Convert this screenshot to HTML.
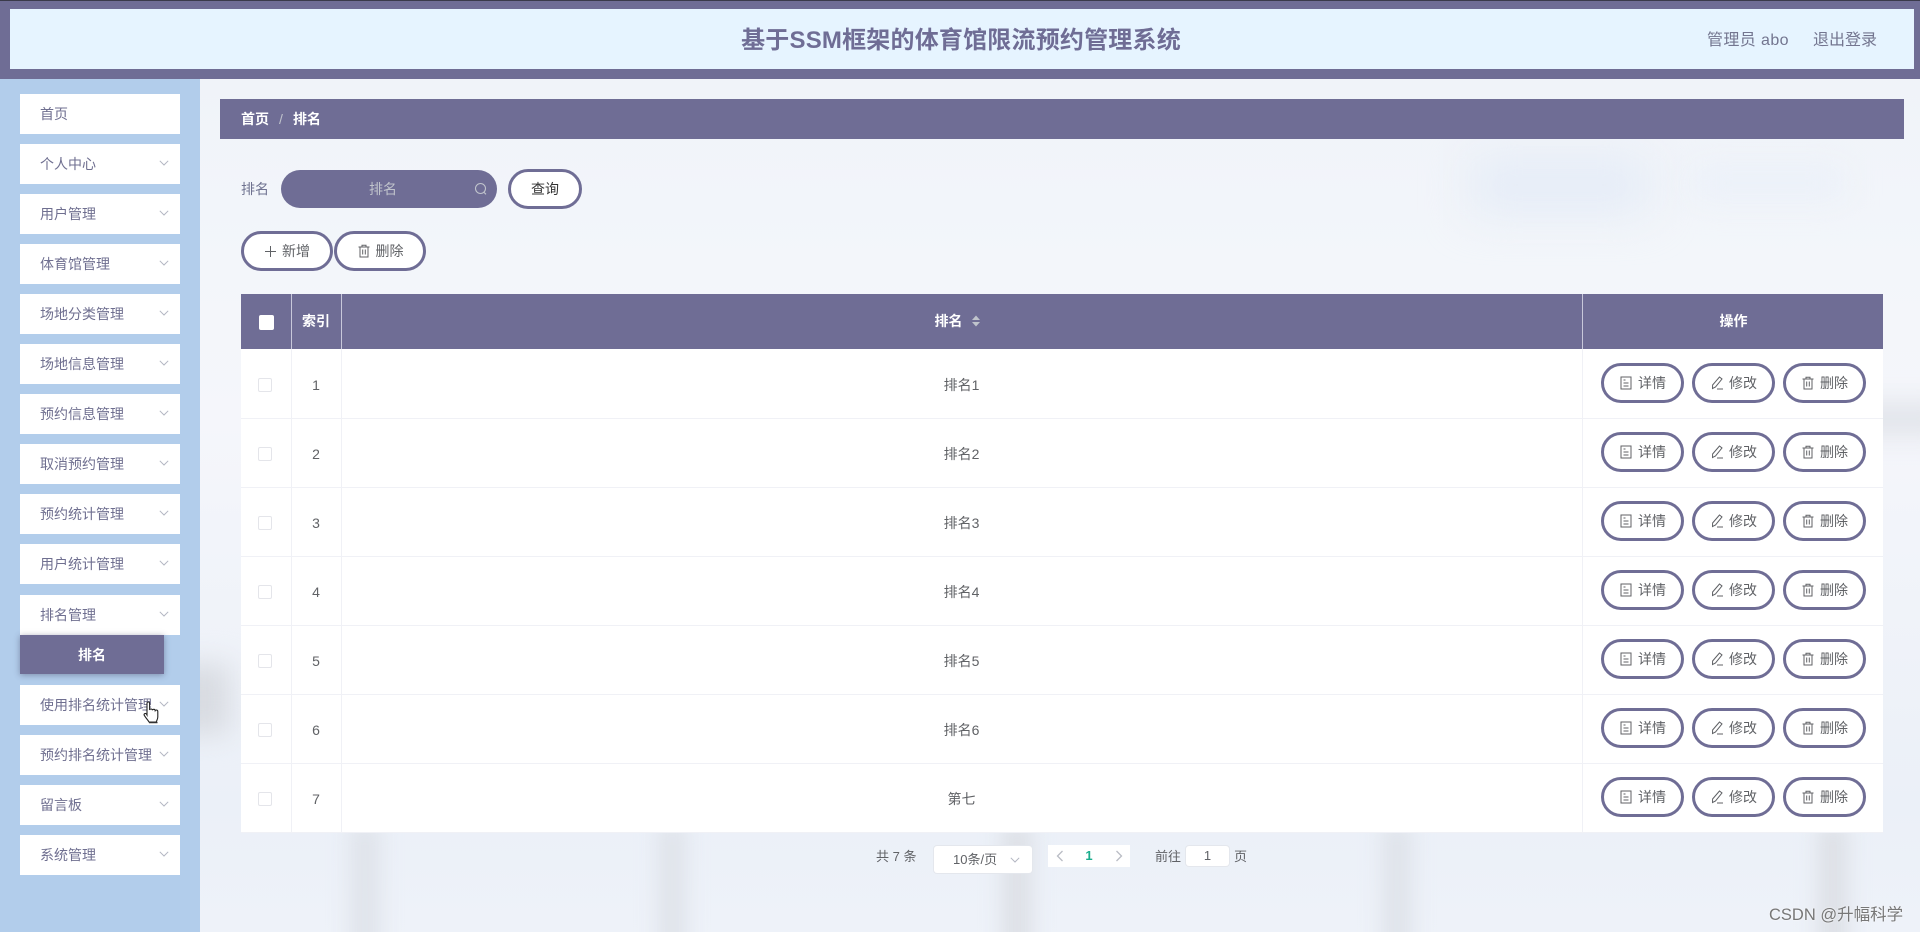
<!DOCTYPE html>
<html lang="zh-CN">
<head>
<meta charset="utf-8">
<title>基于SSM框架的体育馆限流预约管理系统</title>
<style>
html,body{margin:0;padding:0;width:1920px;height:932px;overflow:hidden}
body{position:relative;font-family:"Liberation Sans","Noto Sans CJK SC",sans-serif;font-size:14px;color:#606266;background:#f1f4fa}
div,span{box-sizing:border-box}
.a{position:absolute}
.bg{position:absolute;left:200px;top:79px;width:1720px;height:853px;overflow:hidden;background:linear-gradient(180deg,#f0f3f9 0,#f3f6fa 22%,#f5f6fb 40%,#f0f3f9 62%,#ebf0f8 85%,#eef2f9 100%)}
.bl{position:absolute}
.hd{left:0;top:0;width:1920px;height:79px;background:#6f6d95;border-top:1px solid #3a3a4a}
.hi{left:10px;top:9px;width:1904px;height:60px;background:#e6f4ff}
.title{left:0;top:11px;width:1922px;height:60px;line-height:60px;text-align:center;font-size:24px;font-weight:bold;color:#6f6d95;letter-spacing:.2px}
.ht{top:28px;height:26px;line-height:26px;font-size:16px;color:#73758f;white-space:nowrap}
.side{left:0;top:79px;width:200px;height:853px;background:#b2cdeb}
.m{position:absolute;left:20px;width:160px;height:40px;line-height:40px;background:#fff;color:#6f6f90;padding-left:20px;font-size:14px;white-space:nowrap}
.m svg{position:absolute;left:139px;top:16px}
.sub{left:20px;top:635px;width:144px;height:39px;line-height:40px;background:#6f6d95;color:#fff;text-align:center;font-size:14px;font-weight:bold;box-shadow:0 1px 6px rgba(60,60,90,.45)}
.bc{left:220px;top:99px;width:1684px;height:40px;line-height:40px;background:#6f6d95;color:#fff;font-weight:bold;font-size:14px;white-space:nowrap}
.btn{position:absolute;background:#fff;border:3px solid #6f6d95;border-radius:21px;height:40px;line-height:35px;text-align:center;color:#606266;font-size:14px;white-space:nowrap}
.btn svg{vertical-align:-2px;margin-right:5px}
.op{width:83px}
.tb{left:241px;top:294px;width:1642px;height:539px;background:#fff}
.th{position:absolute;left:0;top:0;width:1642px;height:55px;background:#6f6d95}
.vh{position:absolute;top:0;width:1px;height:55px;background:#c8c8da}
.vb{position:absolute;top:55px;width:1px;height:484px;background:#f0f1f6}
.hb{position:absolute;left:0;width:1642px;height:1px;background:#f0f1f6}
.tt{position:absolute;color:#fff;font-weight:bold;font-size:14px;line-height:55px;top:0;text-align:center;white-space:nowrap}
.cb{position:absolute;left:17px;width:14px;height:14px;border:1px solid #e4e5ea;border-radius:2px;background:#fff}
.n{position:absolute;left:50px;width:50px;text-align:center;height:20px;line-height:20px;font-size:14px;color:#606266}
.c{position:absolute;left:100px;width:1241px;text-align:center;height:20px;line-height:20px;font-size:14px;color:#606266}
.wm{left:1769px;top:904px;font-size:16.500px;line-height:22px;color:#777;white-space:nowrap;text-shadow:0 0 2px #fff}
.pg{font-size:13px;color:#606266;white-space:nowrap}
</style>
</head>
<body>
<svg width="0" height="0" style="position:absolute">
<defs>
<symbol id="chev" viewBox="0 0 10 6"><path d="M.8.8 5 5 9.200.8" fill="none" stroke="#b3b6c2" stroke-width="1"/></symbol>
<symbol id="doc" viewBox="0 0 14 14"><path d="M2 1h10v12H2z" fill="none" stroke="#606266"/><path d="M4.500 4h2M4.500 7h5M4.500 10h5" stroke="#606266"/></symbol>
<symbol id="edit" viewBox="0 0 14 14"><path d="M9.500 1 12 3 5.500 11 2.500 12.500 2.600 9z" fill="none" stroke="#606266"/><path d="M7 13h6" stroke="#606266"/></symbol>
<symbol id="del" viewBox="0 0 14 14"><path d="M1.500 3h11M5 3V1.300h4V3M3 3v10h8V3M5.700 5.500v5M8.300 5.500v5" fill="none" stroke="#606266"/></symbol>
</defs>
</svg>

<div class="bg">
<div class="bl" style="left:1270px;top:78px;width:180px;height:56px;background:#e5ecf7;filter:blur(22px)"></div>
<div class="bl" style="left:1494px;top:90px;width:150px;height:28px;background:#eaf0f9;filter:blur(16px)"></div>
<div class="bl" style="left:1650px;top:325px;width:100px;height:30px;background:#dfe2e8;filter:blur(14px)"></div>
<div class="bl" style="left:-30px;top:585px;width:60px;height:70px;background:#d8dbe1;filter:blur(14px)"></div>
<div class="bl" style="left:150px;top:745px;width:30px;height:140px;background:#dfe3ea;filter:blur(10px)"></div>
<div class="bl" style="left:458px;top:745px;width:28px;height:140px;background:#dfe3ea;filter:blur(10px)"></div>
<div class="bl" style="left:802px;top:745px;width:30px;height:140px;background:#dde0e6;filter:blur(10px)"></div>
<div class="bl" style="left:1182px;top:745px;width:30px;height:140px;background:#dfe3ea;filter:blur(10px)"></div>
<div class="bl" style="left:1618px;top:745px;width:30px;height:140px;background:#dde0e6;filter:blur(10px)"></div>
</div>

<div class="a hd"></div>
<div class="a hi"></div>
<div class="a title">基于SSM框架的体育馆限流预约管理系统</div>
<div class="a ht" style="left:1707px;letter-spacing:.4px">管理员 abo</div>
<div class="a ht" style="left:1813px">退出登录</div>

<div class="a side"></div>
<div class="m" style="top:94px">首页</div>
<div class="m" style="top:144px">个人中心<svg width="10" height="6"><use href="#chev"/></svg></div>
<div class="m" style="top:194px">用户管理<svg width="10" height="6"><use href="#chev"/></svg></div>
<div class="m" style="top:244px">体育馆管理<svg width="10" height="6"><use href="#chev"/></svg></div>
<div class="m" style="top:294px">场地分类管理<svg width="10" height="6"><use href="#chev"/></svg></div>
<div class="m" style="top:344px">场地信息管理<svg width="10" height="6"><use href="#chev"/></svg></div>
<div class="m" style="top:394px">预约信息管理<svg width="10" height="6"><use href="#chev"/></svg></div>
<div class="m" style="top:444px">取消预约管理<svg width="10" height="6"><use href="#chev"/></svg></div>
<div class="m" style="top:494px">预约统计管理<svg width="10" height="6"><use href="#chev"/></svg></div>
<div class="m" style="top:544px">用户统计管理<svg width="10" height="6"><use href="#chev"/></svg></div>
<div class="m" style="top:595px">排名管理<svg width="10" height="6"><use href="#chev"/></svg></div>
<div class="a sub">排名</div>
<div class="m" style="top:685px">使用排名统计管理<svg width="10" height="6"><use href="#chev"/></svg></div>
<div class="m" style="top:735px">预约排名统计管理<svg width="10" height="6"><use href="#chev"/></svg></div>
<div class="m" style="top:785px">留言板<svg width="10" height="6"><use href="#chev"/></svg></div>
<div class="m" style="top:835px">系统管理<svg width="10" height="6"><use href="#chev"/></svg></div>

<svg class="a" style="left:141px;top:701px" width="22" height="24" viewBox="0 0 22 24">
<path d="M6 2.200c0-1.600 2.600-1.600 2.600 0V9c.4-1.400 2.600-1.300 2.800.200.500-1.300 2.600-1.100 2.800.400.600-1 2.500-.7 2.600.800V16c0 2-1 3.200-1.600 5H8c-.8-1.700-2.600-3.200-4.600-6.400-1-1.700.8-2.900 2.100-1.500L6 14z" fill="#fff" stroke="#222" stroke-width="1.100"/>
<path d="M8 21.500h8.500" stroke="#333" stroke-width="1.500"/>
</svg>

<div class="a bc"><span class="a" style="left:21px">首页</span><span class="a" style="left:59px;font-weight:normal;color:#c0c4cc">/</span><span class="a" style="left:73px">排名</span></div>

<div class="a" style="left:241px;top:179px;line-height:20px;color:#6f7290">排名</div>
<div class="a" style="left:281px;top:170px;width:216px;height:38px;line-height:38px;border-radius:19px;background:#6f6d95;color:#c0c4cc;text-align:center;padding-right:12px">排名</div>
<svg class="a" style="left:474px;top:182px" width="14" height="14" viewBox="0 0 14 14"><circle cx="6.500" cy="6.500" r="5" fill="none" stroke="#c0c4cc" stroke-width="1.100"/><path d="M10 10.300l2 2" stroke="#c0c4cc" stroke-width="1.100"/></svg>
<div class="btn" style="left:508px;top:169px;width:74px;color:#333">查询</div>
<div class="btn" style="left:241px;top:231px;width:92px"><svg width="13" height="13" viewBox="0 0 13 13"><path d="M6.500 1v11M1 6.500h11" stroke="#606266" fill="none"/></svg>新增</div>
<div class="btn" style="left:334px;top:231px;width:92px"><svg width="14" height="14"><use href="#del"/></svg>删除</div>

<div class="a tb">
<div class="th"></div>
<div class="vh" style="left:50px"></div><div class="vh" style="left:100px"></div><div class="vh" style="left:1341px"></div>
<div class="vb" style="left:50px"></div><div class="vb" style="left:100px"></div><div class="vb" style="left:1341px"></div>
<div class="a" style="left:18px;top:21px;width:15px;height:15px;background:#fff;border-radius:2px"></div>
<div class="tt" style="left:50px;width:50px">索引</div>
<div class="tt" style="left:100px;width:1241px;padding-right:7px">排名 <svg width="10" height="12" viewBox="0 0 10 12" style="vertical-align:-1px;margin-left:5px"><path d="M5 .5 9 5H1zM5 11.500 1 7h8z" fill="#c0c4cc"/></svg></div>
<div class="tt" style="left:1341px;width:301px;padding-left:2px">操作</div>
<div class="hb" style="top:124px"></div><div class="hb" style="top:193px"></div><div class="hb" style="top:262px"></div><div class="hb" style="top:331px"></div><div class="hb" style="top:400px"></div><div class="hb" style="top:469px"></div><div class="hb" style="top:538px"></div>

<div class="cb" style="top:84px"></div><div class="n" style="top:81px">1</div><div class="c" style="top:81px">排名1</div>
<div class="cb" style="top:153px"></div><div class="n" style="top:150px">2</div><div class="c" style="top:150px">排名2</div>
<div class="cb" style="top:222px"></div><div class="n" style="top:219px">3</div><div class="c" style="top:219px">排名3</div>
<div class="cb" style="top:291px"></div><div class="n" style="top:288px">4</div><div class="c" style="top:288px">排名4</div>
<div class="cb" style="top:360px"></div><div class="n" style="top:357px">5</div><div class="c" style="top:357px">排名5</div>
<div class="cb" style="top:429px"></div><div class="n" style="top:426px">6</div><div class="c" style="top:426px">排名6</div>
<div class="cb" style="top:498px"></div><div class="n" style="top:495px">7</div><div class="c" style="top:495px">第七</div>

<div class="btn op" style="left:1360px;top:69px"><svg width="14" height="14"><use href="#doc"/></svg>详情</div><div class="btn op" style="left:1451px;top:69px"><svg width="14" height="14"><use href="#edit"/></svg>修改</div><div class="btn op" style="left:1542px;top:69px"><svg width="14" height="14"><use href="#del"/></svg>删除</div>
<div class="btn op" style="left:1360px;top:138px"><svg width="14" height="14"><use href="#doc"/></svg>详情</div><div class="btn op" style="left:1451px;top:138px"><svg width="14" height="14"><use href="#edit"/></svg>修改</div><div class="btn op" style="left:1542px;top:138px"><svg width="14" height="14"><use href="#del"/></svg>删除</div>
<div class="btn op" style="left:1360px;top:207px"><svg width="14" height="14"><use href="#doc"/></svg>详情</div><div class="btn op" style="left:1451px;top:207px"><svg width="14" height="14"><use href="#edit"/></svg>修改</div><div class="btn op" style="left:1542px;top:207px"><svg width="14" height="14"><use href="#del"/></svg>删除</div>
<div class="btn op" style="left:1360px;top:276px"><svg width="14" height="14"><use href="#doc"/></svg>详情</div><div class="btn op" style="left:1451px;top:276px"><svg width="14" height="14"><use href="#edit"/></svg>修改</div><div class="btn op" style="left:1542px;top:276px"><svg width="14" height="14"><use href="#del"/></svg>删除</div>
<div class="btn op" style="left:1360px;top:345px"><svg width="14" height="14"><use href="#doc"/></svg>详情</div><div class="btn op" style="left:1451px;top:345px"><svg width="14" height="14"><use href="#edit"/></svg>修改</div><div class="btn op" style="left:1542px;top:345px"><svg width="14" height="14"><use href="#del"/></svg>删除</div>
<div class="btn op" style="left:1360px;top:414px"><svg width="14" height="14"><use href="#doc"/></svg>详情</div><div class="btn op" style="left:1451px;top:414px"><svg width="14" height="14"><use href="#edit"/></svg>修改</div><div class="btn op" style="left:1542px;top:414px"><svg width="14" height="14"><use href="#del"/></svg>删除</div>
<div class="btn op" style="left:1360px;top:483px"><svg width="14" height="14"><use href="#doc"/></svg>详情</div><div class="btn op" style="left:1451px;top:483px"><svg width="14" height="14"><use href="#edit"/></svg>修改</div><div class="btn op" style="left:1542px;top:483px"><svg width="14" height="14"><use href="#del"/></svg>删除</div>
</div>

<div class="a pg" style="left:876px;top:847px;line-height:20px">共 7 条</div>
<div class="a" style="left:934px;top:846px;width:98px;height:27px;line-height:27px;background:#fff;border-radius:3px;box-shadow:0 0 0 1px #e4e7ed;font-size:13px;padding-left:19px;color:#606266">10条/页<svg class="a" style="left:76px;top:11px" width="10" height="6"><use href="#chev"/></svg></div>
<div class="a" style="left:1048px;top:845px;width:82px;height:22px;background:#fff"></div>
<svg class="a" style="left:1056px;top:850px" width="8" height="12" viewBox="0 0 8 12"><path d="M6.500 1 1.500 6l5 5" fill="none" stroke="#b9bcc4" stroke-width="1.300"/></svg>
<svg class="a" style="left:1115px;top:850px" width="8" height="12" viewBox="0 0 8 12"><path d="M1.500 1l5 5-5 5" fill="none" stroke="#b9bcc4" stroke-width="1.300"/></svg>
<div class="a" style="left:1079px;top:845px;width:20px;height:22px;line-height:22px;text-align:center;font-size:13px;font-weight:bold;color:#1aad8d">1</div>
<div class="a pg" style="left:1155px;top:847px;line-height:20px">前往</div>
<div class="a" style="left:1186px;top:846px;width:43px;height:20px;line-height:20px;background:#fff;border-radius:3px;box-shadow:0 0 0 1px #e4e7ed;text-align:center;font-size:13px">1</div>
<div class="a pg" style="left:1234px;top:847px;line-height:20px">页</div>

<div class="a wm">CSDN @升幅科学</div>
</body>
</html>
